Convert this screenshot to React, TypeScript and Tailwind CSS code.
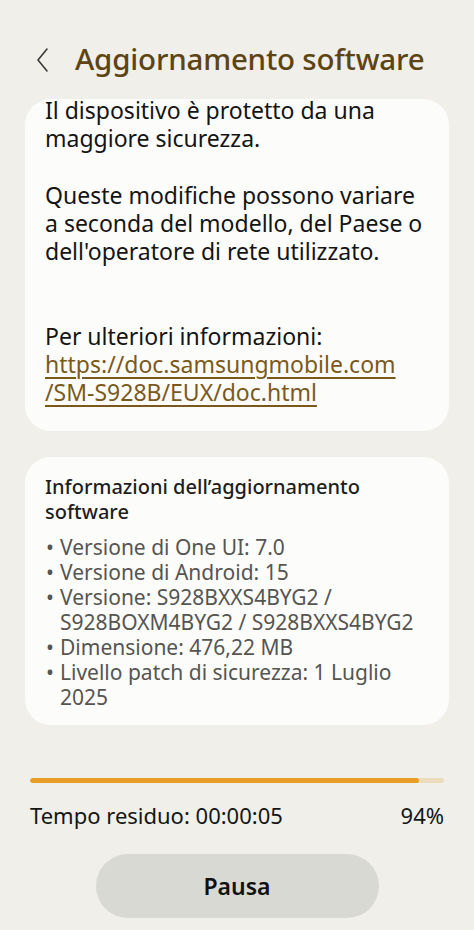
import React from "react";

const font = { fontFamily: '"Noto Sans", Roboto, sans-serif' };

export default function App() {
  return (
    <div
      className="w-[474px] h-[930px] bg-[#f0efea] overflow-hidden flex flex-col"
      style={font}
    >
      {/* Header */}
      <div className="h-[99px] flex items-start pt-[40px] pl-[35px]">
        <svg width="16" height="26" viewBox="0 0 16 26" className="mt-[7px]">
          <path d="M12 2 L3 13 L12 24" fill="none" stroke="#3a3a3a" strokeWidth="1.6" strokeLinecap="round" strokeLinejoin="round" />
        </svg>
        <div className="ml-[24px] text-[29.5px] leading-[38px] font-medium text-[#5c4413] tracking-[-0.2px]">
          Aggiornamento software
        </div>
      </div>

      {/* Card 1 */}
      <div className="mx-[25px] rounded-[26px] bg-[#fcfcfa] px-[20px] pb-[25px]">
        <div className="-mt-[3px] text-[23px] leading-[28.2px] text-[#141414]">
          <p>Il dispositivo è protetto da una</p>
          <p>maggiore sicurezza.</p>
          <p>&nbsp;</p>
          <p>Queste modifiche possono variare</p>
          <p>a seconda del modello, del Paese o</p>
          <p>dell'operatore di rete utilizzato.</p>
          <p>&nbsp;</p>
          <p>&nbsp;</p>
          <p>Per ulteriori informazioni:</p>
          <p className="text-[#7a5a1c] underline underline-offset-[4px] decoration-[1.5px]">
            https://doc.samsungmobile.com
            <br />
            /SM-S928B/EUX/doc.html
          </p>
        </div>
      </div>

      {/* Card 2 */}
      <div className="mt-[26px] mx-[25px] rounded-[26px] bg-[#fcfcfa] pl-[20px] pr-[16px] pt-[17px] pb-[15px]">
        <div className="text-[20px] leading-[25px] font-medium text-[#1e1e1e]">
          Informazioni dell’aggiornamento software
        </div>
        <ul className="mt-[11px] text-[21px] leading-[25px] text-[#555552]">
          {[
            "Versione di One UI: 7.0",
            "Versione di Android: 15",
            "Versione: S928BXXS4BYG2 / S928BOXM4BYG2 / S928BXXS4BYG2",
            "Dimensione: 476,22 MB",
            "Livello patch di sicurezza: 1 Luglio 2025",
          ].map((t) => (
            <li key={t} className="flex">
              <span className="w-[15px] shrink-0 pl-[1px]">•</span>
              <span>{t}</span>
            </li>
          ))}
        </ul>
      </div>

      {/* Progress */}
      <div className="mt-[53px] mx-[30px]">
        <div className="h-[5px] rounded-full bg-[#eddcbc] overflow-hidden">
          <div className="h-full rounded-full bg-[#e89d27]" style={{ width: "94%" }} />
        </div>
        <div className="mt-[19px] flex justify-between text-[22px] leading-[26px] text-[#151515]">
          <span>Tempo residuo: 00:00:05</span>
          <span>94%</span>
        </div>
      </div>

      {/* Button */}
      <div className="mt-[26px] flex justify-center">
        <button className="w-[283px] h-[64px] rounded-full bg-[#d9d9d4] text-[23px] font-semibold text-[#111]">
          Pausa
        </button>
      </div>
    </div>
  );
}
